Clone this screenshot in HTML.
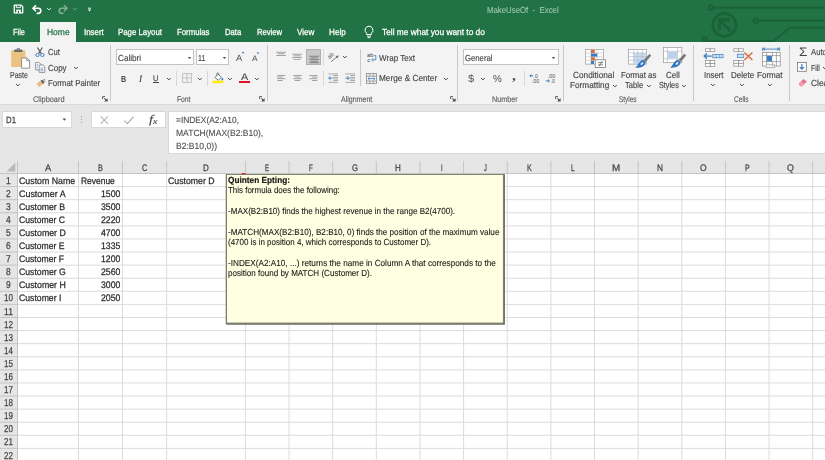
<!DOCTYPE html>
<html lang="en">
<head>
<meta charset="utf-8">
<title>MakeUseOf - Excel</title>
<style>
html,body{margin:0;padding:0;}
body{width:825px;height:460px;overflow:hidden;position:relative;background:#fff;font-family:"Liberation Sans",sans-serif;}
.tl{position:absolute;left:0;top:0;width:825px;height:460px;will-change:transform;}
.b{position:absolute;box-sizing:border-box;display:block;}
.t{position:absolute;white-space:pre;transform-origin:0 50%;display:block;text-rendering:geometricPrecision;-webkit-text-stroke:0.25px currentColor;}
</style>
</head>
<body>
<div class="b" style="left:0px;top:0px;width:825px;height:42px;background:#217346;"></div>
<div class="b" style="left:0px;top:42px;width:825px;height:62px;background:#f3f3f3;"></div>
<div class="b" style="left:0px;top:104px;width:825px;height:70px;background:#e6e6e6;"></div>
<div class="b" style="left:0px;top:104px;width:825px;height:1px;background:#dadada;"></div>
<svg class="b" style="left:690px;top:0px" width="135" height="42" viewBox="0 0 135 42">
<g fill="none" stroke="#1b6239" stroke-width="2">
<circle cx="20.9" cy="7.7" r="2.2"/><path d="M23.2 7.7H135"/>
<circle cx="65.8" cy="20.8" r="2.2"/><path d="M68.1 20.8H135"/>
<circle cx="14.4" cy="39.8" r="2.2"/><path d="M16.6 41H83.5L99.8 27.8H135"/>
<circle cx="34.4" cy="24.9" r="11.6" stroke-width="2.8"/>
<path d="M29.4 30.4V19.9H39.9M30.4 20.9L40.6 31.1" stroke-width="3.2"/>
</g></svg>
<svg class="b" style="left:13px;top:4px" width="11" height="10" viewBox="0 0 11 10"><path d="M1.3 1.1H8.2L9.7 2.6V8.9H1.3Z" fill="none" stroke="#fff" stroke-width="1.3" stroke-linejoin="round"/>
<rect x="3.2" y="5.6" width="4.6" height="3.6" fill="#fff"/><rect x="4.8" y="6.8" width="1.2" height="2.4" fill="#217346"/>
<path d="M3.3 1.2V3.6H7.4V1.2" fill="none" stroke="#fff" stroke-width="0.9"/></svg>
<svg class="b" style="left:31px;top:3.6px" width="14" height="11" viewBox="0 0 14 11"><path d="M2.2 4.2H7.2A2.6 2.6 0 0 1 7.2 9.4H5.6" fill="none" stroke="#fff" stroke-width="1.6"/>
<path d="M5 1.2L2 4.2L5 7.2" fill="none" stroke="#fff" stroke-width="1.6"/></svg>
<svg class="b" style="left:46px;top:6.2px" width="6" height="6" viewBox="0 0 6 6"><path d="M1 2L3 4L5 2" fill="none" stroke="#d6e7dc" stroke-width="1"/></svg>
<svg class="b" style="left:57px;top:3.6px" width="14" height="11" viewBox="0 0 14 11"><g opacity="0.42"><path d="M9.8 4.2H4.8A2.6 2.6 0 0 0 4.8 9.4H6.4" fill="none" stroke="#fff" stroke-width="1.6"/>
<path d="M7 1.2L10 4.2L7 7.2" fill="none" stroke="#fff" stroke-width="1.6"/></g></svg>
<svg class="b" style="left:72.2px;top:6.2px" width="6" height="6" viewBox="0 0 6 6"><path d="M1 2L3 4L5 2" fill="none" stroke="#fff" stroke-width="1" opacity="0.35"/></svg>
<svg class="b" style="left:86.8px;top:7.4px" width="5" height="6" viewBox="0 0 5 6"><path d="M1 1.2H4" stroke="#fff" stroke-width="0.9"/><path d="M0.8 2.6H4.2L2.5 4.6Z" fill="#fff"/></svg>
<div class="b" style="left:40.4px;top:22px;width:36px;height:20px;background:#f3f3f3;"></div>
<svg class="b" style="left:363px;top:25px" width="12" height="14" viewBox="0 0 12 14"><path d="M6 1.2A3.9 3.9 0 0 0 3.6 8.2V9.6H8.4V8.2A3.9 3.9 0 0 0 6 1.2Z" fill="none" stroke="#fff" stroke-width="1"/>
<path d="M4 11.2H8M4.6 12.6H7.4" stroke="#fff" stroke-width="0.9"/></svg>
<div class="b" style="left:2px;top:111px;width:69.5px;height:16.6px;background:#fff;border:1px solid #d9d9d9;"></div>
<svg class="b" style="left:62.4px;top:118px" width="5" height="4" viewBox="0 0 5 4"><path d="M0.5 0.6H4.3L2.4 2.7Z" fill="#505050"/></svg>
<svg class="b" style="left:80px;top:115px" width="3" height="10" viewBox="0 0 3 10"><g fill="#9a9a9a"><circle cx="1.5" cy="1.6" r="0.7"/><circle cx="1.5" cy="4.6" r="0.7"/><circle cx="1.5" cy="7.6" r="0.7"/></g></svg>
<div class="b" style="left:91.3px;top:111px;width:74.5px;height:16.6px;background:#fff;border:1px solid #d9d9d9;"></div>
<svg class="b" style="left:98.6px;top:115px" width="11" height="10" viewBox="0 0 11 10"><path d="M1.6 1.4L9 8.8M9 1.4L1.6 8.8" stroke="#b4b4b4" stroke-width="1.05" fill="none"/></svg>
<svg class="b" style="left:122.6px;top:115px" width="12" height="10" viewBox="0 0 12 10"><path d="M1.4 5.6L4.4 8.6L10.6 1.6" stroke="#b0b0b0" stroke-width="1.25" fill="none"/></svg>
<div class="b" style="left:168.3px;top:111px;width:660px;height:43px;background:#fff;border:1px solid #d9d9d9;"></div>
<div class="b" style="left:0px;top:173.5px;width:825px;height:286.5px;background:#fff;"></div>
<div class="b" style="left:0px;top:173.5px;width:17.5px;height:286.5px;background:#e6e6e6;"></div>
<svg class="b" style="left:0px;top:0px" width="825" height="460" viewBox="0 0 825 460"><g fill="none" stroke-width="1">
<path d="M17.5 186.59H825M17.5 199.68H825M17.5 212.77H825M17.5 225.86H825M17.5 238.95H825M17.5 252.04H825M17.5 265.13H825M17.5 278.22H825M17.5 291.31H825M17.5 304.40H825M17.5 317.49H825M17.5 330.58H825M17.5 343.67H825M17.5 356.76H825M17.5 369.85H825M17.5 382.94H825M17.5 396.03H825M17.5 409.12H825M17.5 422.21H825M17.5 435.30H825M17.5 448.39H825M17.5 461.48H825M78.50 173.5V460M122.55 173.5V460M166.60 173.5V460M245.40 173.5V460M289.04 173.5V460M332.68 173.5V460M376.32 173.5V460M419.96 173.5V460M463.60 173.5V460M507.24 173.5V460M550.88 173.5V460M594.52 173.5V460M638.16 173.5V460M681.80 173.5V460M725.44 173.5V460M769.08 173.5V460M812.72 173.5V460" stroke="#dcdcdc"/>
<path d="M0 186.59H17.5M0 199.68H17.5M0 212.77H17.5M0 225.86H17.5M0 238.95H17.5M0 252.04H17.5M0 265.13H17.5M0 278.22H17.5M0 291.31H17.5M0 304.40H17.5M0 317.49H17.5M0 330.58H17.5M0 343.67H17.5M0 356.76H17.5M0 369.85H17.5M0 382.94H17.5M0 396.03H17.5M0 409.12H17.5M0 422.21H17.5M0 435.30H17.5M0 448.39H17.5M0 461.48H17.5M78.50 161V173.5M122.55 161V173.5M166.60 161V173.5M245.40 161V173.5M289.04 161V173.5M332.68 161V173.5M376.32 161V173.5M419.96 161V173.5M463.60 161V173.5M507.24 161V173.5M550.88 161V173.5M594.52 161V173.5M638.16 161V173.5M681.80 161V173.5M725.44 161V173.5M769.08 161V173.5M812.72 161V173.5M17.5 161V460M0 173.5H825" stroke="#c4c4c4"/></g></svg>
<svg class="b" style="left:6px;top:162px" width="10" height="10" viewBox="0 0 10 10"><path d="M9.3 0.8V9.6H0.6Z" fill="#b9b9b9"/></svg>
<svg class="b" style="left:240.6px;top:173.2px" width="5" height="4" viewBox="0 0 5 4"><path d="M0 0H4.4V3.6Z" fill="#e0262c"/></svg>
<svg class="b" style="left:224px;top:172px" width="283" height="155" viewBox="0 0 283 155"><rect x="1.4" y="2.4" width="1.2" height="149.8" fill="#b9b9a6"/>
<rect x="2.2" y="2.1" width="278.7" height="150.6" fill="#66665e"/>
<rect x="3.0" y="2.9" width="276.0" height="147.9" fill="#ffffe1"/>
<path d="M279.4 3V151.2H3.4" fill="none" stroke="#8e8e7c" stroke-width="0.8"/></svg>
<svg class="b" style="left:10px;top:46.5px" width="21" height="22.5" viewBox="0 0 21 22.5">
<rect x="1.2" y="3.2" width="14.2" height="16.8" rx="0.7" fill="#eac282"/>
<path d="M4.2 5.1V3.2Q4.2 2.4 5 2.4H6.6Q6.9 0.7 8.3 0.7Q9.7 0.7 10 2.4H11.6Q12.4 2.4 12.4 3.2V5.1Z" fill="#6a6a6a"/>
<circle cx="8.3" cy="2.2" r="0.6" fill="#d8d8d8"/>
<path d="M11.6 10.9H16.8L19.6 13.7V21.2H11.6Z" fill="#fff" stroke="#7a7a7a" stroke-width="0.8"/>
<path d="M16.8 10.9V13.7H19.6" fill="none" stroke="#7a7a7a" stroke-width="0.8"/></svg>
<svg class="b" style="left:15.3px;top:83.25px" width="5.8" height="3.9" viewBox="0 0 5.8 3.9"><path d="M1 1L2.9 2.9L4.8 1" fill="none" stroke="#484848" stroke-width="1"/></svg>
<svg class="b" style="left:35px;top:46.8px" width="10" height="10.5" viewBox="0 0 10 10.5"><path d="M2.4 0.5L6.3 6.6M7.4 0.5L3.5 6.6" stroke="#555" stroke-width="1.1" fill="none"/>
<ellipse cx="2.5" cy="8" rx="1.7" ry="1.6" fill="none" stroke="#3e7cc0" stroke-width="0.95"/>
<ellipse cx="7.4" cy="8" rx="1.7" ry="1.6" fill="none" stroke="#3e7cc0" stroke-width="0.95"/></svg>
<svg class="b" style="left:35px;top:62px" width="10.5" height="11" viewBox="0 0 10.5 11"><path d="M0.6 0.6H4.2L5.9 2.3V7.8H0.6Z" fill="#fff" stroke="#7a7a7a" stroke-width="0.8"/>
<path d="M4.2 3H8L9.8 4.8V10.4H4.2Z" fill="#fff" stroke="#7a7a7a" stroke-width="0.8"/>
<path d="M5.4 6H8.4M5.4 7.4H8.4M5.4 8.8H8.4M1.8 2.6H3.2M1.8 4H3M1.8 5.4H3" stroke="#3e7cc0" stroke-width="0.6"/></svg>
<svg class="b" style="left:72.9px;top:65.65px" width="5.8" height="3.9" viewBox="0 0 5.8 3.9"><path d="M1 1L2.9 2.9L4.8 1" fill="none" stroke="#484848" stroke-width="1"/></svg>
<svg class="b" style="left:36px;top:79px" width="10" height="8.5" viewBox="0 0 10 8.5"><path d="M0.4 4.8L4.2 2L6.6 5.2L3 7.9Z" fill="#e9bd77"/>
<path d="M4.5 1.8L6 0.7L8.4 3.8L6.9 4.9Z" fill="#555"/><path d="M6.8 1.6L9 0.3M7.6 2.6L9.2 2" stroke="#555" stroke-width="0.8"/></svg>
<svg class="b" style="left:102.0px;top:96.19999999999999px" width="7" height="7" viewBox="0 0 7 7"><path d="M0.6 3V0.6H3" fill="none" stroke="#5a5a5a" stroke-width="1"/><path d="M2.4 2.4L4.6 4.6" fill="none" stroke="#4a4a4a" stroke-width="1.1"/><path d="M5.6 2.2V5.6H2.2Z" fill="#4a4a4a"/></svg>
<div class="b" style="left:110.1px;top:45.2px;width:1px;height:56.2px;background:#c8c8c8;"></div>
<div class="b" style="left:116.2px;top:49.2px;width:78.2px;height:16.2px;background:#fff;border:1px solid #c4c4c4;"></div>
<svg class="b" style="left:187px;top:55.7px" width="5" height="4" viewBox="0 0 5 4"><path d="M0.7 0.9H4.3L2.5 2.9Z" fill="#505050"/></svg>
<div class="b" style="left:196.3px;top:49.2px;width:33.2px;height:16.2px;background:#fff;border:1px solid #c4c4c4;"></div>
<svg class="b" style="left:222.2px;top:55.7px" width="5" height="4" viewBox="0 0 5 4"><path d="M0.7 0.9H4.3L2.5 2.9Z" fill="#505050"/></svg>
<svg class="b" style="left:240.6px;top:51.0px" width="4" height="3" viewBox="0 0 4 3"><path d="M0.5 2.3L2 0.6L3.5 2.3Z" fill="#3e7cc0"/></svg>
<svg class="b" style="left:256.2px;top:51.6px" width="4" height="3" viewBox="0 0 4 3"><path d="M0.5 0.6L2 2.3L3.5 0.6Z" fill="#3e7cc0"/></svg>
<div class="b" style="left:153.2px;top:81.8px;width:6.0px;height:0.9px;background:#444;"></div>
<svg class="b" style="left:165.9px;top:76.95px" width="5.8" height="3.9" viewBox="0 0 5.8 3.9"><path d="M1 1L2.9 2.9L4.8 1" fill="none" stroke="#484848" stroke-width="1"/></svg>
<div class="b" style="left:176.1px;top:71.4px;width:1px;height:14.2px;background:#d8d8d8;"></div>
<svg class="b" style="left:181.6px;top:73.2px" width="10" height="10" viewBox="0 0 10 10"><g fill="none" stroke="#bcbcbc" stroke-width="0.9"><rect x="0.6" y="0.6" width="8.8" height="8.8"/><path d="M5 0.6V9.4M0.6 5H9.4"/></g></svg>
<svg class="b" style="left:196.6px;top:76.95px" width="5.8" height="3.9" viewBox="0 0 5.8 3.9"><path d="M1 1L2.9 2.9L4.8 1" fill="none" stroke="#484848" stroke-width="1"/></svg>
<div class="b" style="left:207.1px;top:71.4px;width:1px;height:14.2px;background:#d8d8d8;"></div>
<svg class="b" style="left:211.8px;top:72.2px" width="12" height="12" viewBox="0 0 12 12"><path d="M3 5.4L6.2 2.2L9.4 5.4L6.2 8.2Z" fill="#fff" stroke="#666" stroke-width="0.9"/>
<path d="M4.8 3.6V1.8Q4.8 0.8 5.8 0.8Q6.8 0.8 6.8 1.8V2.6" fill="none" stroke="#666" stroke-width="0.8"/>
<path d="M10.4 5.4Q11.4 7 11.4 7.6A1 1 0 0 1 9.4 7.6Q9.4 7 10.4 5.4Z" fill="#3e7cc0"/>
<rect x="0.5" y="8.7" width="10.8" height="2.5" fill="#ffeb00"/></svg>
<svg class="b" style="left:226.9px;top:76.95px" width="5.8" height="3.9" viewBox="0 0 5.8 3.9"><path d="M1 1L2.9 2.9L4.8 1" fill="none" stroke="#484848" stroke-width="1"/></svg>
<div class="b" style="left:239.1px;top:80.9px;width:10.5px;height:2.5px;background:#e81123;"></div>
<svg class="b" style="left:253.7px;top:76.95px" width="5.8" height="3.9" viewBox="0 0 5.8 3.9"><path d="M1 1L2.9 2.9L4.8 1" fill="none" stroke="#484848" stroke-width="1"/></svg>
<svg class="b" style="left:259.0px;top:96.19999999999999px" width="7" height="7" viewBox="0 0 7 7"><path d="M0.6 3V0.6H3" fill="none" stroke="#5a5a5a" stroke-width="1"/><path d="M2.4 2.4L4.6 4.6" fill="none" stroke="#4a4a4a" stroke-width="1.1"/><path d="M5.6 2.2V5.6H2.2Z" fill="#4a4a4a"/></svg>
<div class="b" style="left:267.3px;top:45.2px;width:1px;height:56.2px;background:#c8c8c8;"></div>
<svg class="b" style="left:276px;top:50px" width="12" height="14" viewBox="0 0 12 14"><rect x="0.2" y="1.8" width="9.8" height="0.75" fill="#8a8a8a"/><rect x="1.6" y="3.4" width="7" height="0.75" fill="#8a8a8a"/><rect x="0.2" y="5.0" width="9.8" height="0.75" fill="#8a8a8a"/></svg>
<svg class="b" style="left:292.0px;top:50px" width="12" height="14" viewBox="0 0 12 14"><rect x="0.2" y="3.8" width="9.8" height="0.75" fill="#8a8a8a"/><rect x="1.6" y="5.5" width="7" height="0.75" fill="#8a8a8a"/><rect x="0.2" y="7.2" width="9.8" height="0.75" fill="#8a8a8a"/><rect x="1.6" y="8.9" width="7" height="0.75" fill="#8a8a8a"/></svg>
<div class="b" style="left:305.8px;top:49.2px;width:15.5px;height:16.2px;background:#c8c8c8;border:1px solid #b0b0b0;"></div>
<svg class="b" style="left:308.6px;top:50px" width="12" height="14" viewBox="0 0 12 14"><rect x="0.2" y="5.8" width="9.8" height="0.75" fill="#6e6e6e"/><rect x="1.6" y="7.5" width="7" height="0.75" fill="#6e6e6e"/><rect x="0.2" y="9.2" width="9.8" height="0.75" fill="#6e6e6e"/><rect x="1.6" y="10.9" width="7" height="0.75" fill="#6e6e6e"/><rect x="0.2" y="12.4" width="9.8" height="0.75" fill="#6e6e6e"/></svg>
<div class="b" style="left:323.2px;top:49.4px;width:1px;height:16.0px;background:#d8d8d8;"></div>
<svg class="b" style="left:328px;top:51px" width="12" height="12" viewBox="0 0 12 12"><text x="0.4" y="6.6" font-size="5.8" font-family="Liberation Sans" fill="#555" transform="rotate(-40 3 6)">ab</text>
<path d="M3.2 10.6L9.4 5.6" stroke="#6a6a6a" stroke-width="0.9"/><path d="M10.8 4.4L7.6 5L9.4 7.4Z" fill="#6a6a6a"/></svg>
<svg class="b" style="left:341.7px;top:55.45px" width="5.8" height="3.9" viewBox="0 0 5.8 3.9"><path d="M1 1L2.9 2.9L4.8 1" fill="none" stroke="#484848" stroke-width="1"/></svg>
<div class="b" style="left:360.1px;top:49.4px;width:1px;height:36.4px;background:#c8c8c8;"></div>
<svg class="b" style="left:366.6px;top:51.6px" width="10" height="11" viewBox="0 0 10 11"><text x="0" y="4.9" font-size="6.2" font-family="Liberation Sans" fill="#404040" textLength="6.4" lengthAdjust="spacingAndGlyphs">ab</text>
<text x="0.2" y="10" font-size="6.2" font-family="Liberation Sans" fill="#404040">c</text>
<path d="M7.2 3.6H8.8V7.8H5.2" fill="none" stroke="#3e7cc0" stroke-width="0.85"/><path d="M6.2 6.4L4.6 7.8L6.2 9.2" fill="none" stroke="#3e7cc0" stroke-width="0.85"/></svg>
<svg class="b" style="left:276.6px;top:73px" width="12" height="14" viewBox="0 0 12 14"><rect x="0.2" y="2.0" width="8.2" height="0.75" fill="#8a8a8a"/><rect x="0.2" y="3.7" width="5.6" height="0.75" fill="#8a8a8a"/><rect x="0.2" y="5.4" width="8.2" height="0.75" fill="#8a8a8a"/><rect x="0.2" y="7.1" width="5.6" height="0.75" fill="#8a8a8a"/></svg>
<svg class="b" style="left:292.6px;top:73px" width="12" height="14" viewBox="0 0 12 14"><rect x="0.2" y="2.0" width="8.6" height="0.75" fill="#8a8a8a"/><rect x="1.7" y="3.7" width="5.6" height="0.75" fill="#8a8a8a"/><rect x="0.2" y="5.4" width="8.6" height="0.75" fill="#8a8a8a"/><rect x="1.7" y="7.1" width="5.6" height="0.75" fill="#8a8a8a"/></svg>
<svg class="b" style="left:309.4px;top:73px" width="12" height="14" viewBox="0 0 12 14"><rect x="0.2" y="2.0" width="8.2" height="0.75" fill="#8a8a8a"/><rect x="2.8" y="3.7" width="5.6" height="0.75" fill="#8a8a8a"/><rect x="0.2" y="5.4" width="8.2" height="0.75" fill="#8a8a8a"/><rect x="2.8" y="7.1" width="5.6" height="0.75" fill="#8a8a8a"/></svg>
<div class="b" style="left:323.2px;top:71.4px;width:1px;height:14.2px;background:#d8d8d8;"></div>
<svg class="b" style="left:328.4px;top:73.2px" width="11" height="10" viewBox="0 0 11 10"><rect x="0.4" y="0.6" width="9.6" height="0.7" fill="#8a8a8a"/><rect x="0.4" y="8.9" width="9.6" height="0.7" fill="#8a8a8a"/><rect x="5.2" y="2.2" width="4.8" height="0.7" fill="#8a8a8a"/><rect x="5.2" y="3.9" width="4.8" height="0.7" fill="#8a8a8a"/><rect x="5.2" y="5.6" width="4.8" height="0.7" fill="#8a8a8a"/><rect x="5.2" y="7.3" width="4.8" height="0.7" fill="#8a8a8a"/>
<path d="M4.6 5.1H0.8M2.5 3.3L0.7 5.1L2.5 6.9" fill="none" stroke="#3e7cc0" stroke-width="1"/></svg>
<svg class="b" style="left:344.8px;top:73.2px" width="11" height="10" viewBox="0 0 11 10"><rect x="0.4" y="0.6" width="9.6" height="0.7" fill="#8a8a8a"/><rect x="0.4" y="8.9" width="9.6" height="0.7" fill="#8a8a8a"/><rect x="5.2" y="2.2" width="4.8" height="0.7" fill="#8a8a8a"/><rect x="5.2" y="3.9" width="4.8" height="0.7" fill="#8a8a8a"/><rect x="5.2" y="5.6" width="4.8" height="0.7" fill="#8a8a8a"/><rect x="5.2" y="7.3" width="4.8" height="0.7" fill="#8a8a8a"/>
<path d="M0.4 5.1H4.2M2.5 3.3L4.3 5.1L2.5 6.9" fill="none" stroke="#3e7cc0" stroke-width="1"/></svg>
<svg class="b" style="left:365.6px;top:72.8px" width="11" height="11.4" viewBox="0 0 11 11.4"><g fill="none" stroke="#868686" stroke-width="0.75"><rect x="0.5" y="0.5" width="10" height="10.2"/><path d="M0.5 3.2H10.5M0.5 8H10.5M3.8 0.5V3.2M7.2 0.5V3.2M3.8 8V10.7M7.2 8V10.7"/></g>
<path d="M2 5.6H9M3.3 4.4L2 5.6L3.3 6.8M7.7 4.4L9 5.6L7.7 6.8" fill="none" stroke="#3e7cc0" stroke-width="0.85"/></svg>
<svg class="b" style="left:443.4px;top:76.95px" width="5.8" height="3.9" viewBox="0 0 5.8 3.9"><path d="M1 1L2.9 2.9L4.8 1" fill="none" stroke="#484848" stroke-width="1"/></svg>
<svg class="b" style="left:449.7px;top:96.19999999999999px" width="7" height="7" viewBox="0 0 7 7"><path d="M0.6 3V0.6H3" fill="none" stroke="#5a5a5a" stroke-width="1"/><path d="M2.4 2.4L4.6 4.6" fill="none" stroke="#4a4a4a" stroke-width="1.1"/><path d="M5.6 2.2V5.6H2.2Z" fill="#4a4a4a"/></svg>
<div class="b" style="left:457.3px;top:45.2px;width:1px;height:56.2px;background:#c8c8c8;"></div>
<div class="b" style="left:463.2px;top:49.2px;width:95.4px;height:16.2px;background:#fff;border:1px solid #c4c4c4;"></div>
<svg class="b" style="left:551.2px;top:55.7px" width="5" height="4" viewBox="0 0 5 4"><path d="M0.7 0.9H4.3L2.5 2.9Z" fill="#505050"/></svg>
<svg class="b" style="left:480.4px;top:76.95px" width="5.8" height="3.9" viewBox="0 0 5.8 3.9"><path d="M1 1L2.9 2.9L4.8 1" fill="none" stroke="#484848" stroke-width="1"/></svg>
<div class="b" style="left:523.9px;top:71.4px;width:1px;height:14.2px;background:#d8d8d8;"></div>
<svg class="b" style="left:529px;top:73px" width="11" height="11" viewBox="0 0 11 11"><text x="4.6" y="4.8" font-size="5" font-family="Liberation Sans" fill="#4a4a4a">.0</text>
<text x="2.8" y="9.9" font-size="5" font-family="Liberation Sans" fill="#4a4a4a" textLength="7.4" lengthAdjust="spacingAndGlyphs">.00</text>
<path d="M4.2 2.8H0.9M2.3 1.4L0.8 2.8L2.3 4.2" fill="none" stroke="#3e7cc0" stroke-width="1"/></svg>
<svg class="b" style="left:545.2px;top:73px" width="11" height="11" viewBox="0 0 11 11"><text x="2.8" y="4.8" font-size="5" font-family="Liberation Sans" fill="#4a4a4a" textLength="7.4" lengthAdjust="spacingAndGlyphs">.00</text>
<text x="5.6" y="9.9" font-size="5" font-family="Liberation Sans" fill="#4a4a4a">.0</text>
<path d="M0.8 7.9H4.3M2.9 6.5L4.4 7.9L2.9 9.3" fill="none" stroke="#3e7cc0" stroke-width="1"/></svg>
<svg class="b" style="left:555.4px;top:96.19999999999999px" width="7" height="7" viewBox="0 0 7 7"><path d="M0.6 3V0.6H3" fill="none" stroke="#5a5a5a" stroke-width="1"/><path d="M2.4 2.4L4.6 4.6" fill="none" stroke="#4a4a4a" stroke-width="1.1"/><path d="M5.6 2.2V5.6H2.2Z" fill="#4a4a4a"/></svg>
<div class="b" style="left:562.9px;top:45.2px;width:1px;height:56.2px;background:#c8c8c8;"></div>
<svg class="b" style="left:585px;top:49px" width="22" height="20" viewBox="0 0 22 20"><rect x="0.5" y="0.5" width="18" height="14.6" fill="#fff" stroke="#9a9a9a" stroke-width="0.7"/>
<path d="M5.8 0.5V15.1M12.2 0.5V15.1M0.5 4.1H18.5M0.5 7.8H18.5M0.5 11.4H18.5" stroke="#bdbdbd" stroke-width="0.6"/>
<rect x="6" y="0.8" width="3.8" height="3.1" fill="#d8693c"/><rect x="6" y="4.5" width="6.2" height="3.1" fill="#3e7cc0"/>
<rect x="6" y="8.2" width="3.8" height="3.1" fill="#d8693c"/><rect x="6" y="11.8" width="3" height="3.1" fill="#3e7cc0"/>
<rect x="10.2" y="10.8" width="10.2" height="7.6" fill="#fff" stroke="#7a7a7a" stroke-width="0.8"/>
<path d="M13 13.6H18M13 15.8H18M17.2 12.2L14.2 17.2" stroke="#555" stroke-width="0.7"/></svg>
<svg class="b" style="left:611.5px;top:83.65px" width="5.8" height="3.9" viewBox="0 0 5.8 3.9"><path d="M1 1L2.9 2.9L4.8 1" fill="none" stroke="#484848" stroke-width="1"/></svg>
<svg class="b" style="left:628.4px;top:49px" width="25" height="20" viewBox="0 0 25 20"><rect x="0.5" y="0.5" width="18" height="14.6" fill="#fff" stroke="#9a9a9a" stroke-width="0.7"/>
<rect x="5.6" y="3.9" width="12.8" height="11.1" fill="#c9dbf0"/>
<path d="M5.6 0.5V15.1M9.9 0.5V15.1M14.2 0.5V15.1M0.5 3.9H18.5M0.5 7.6H18.5M0.5 11.3H18.5" stroke="#a9b4c4" stroke-width="0.55"/>
<g transform="translate(-0.4 1.6)"><path d="M21.8 3.4L23.6 5L18 11.6L15.8 9.6Z" fill="#777777"/>
<path d="M15.4 9.4L18 11.8C17.8 15.6 12.6 17.6 7.6 17.2C10.4 15.6 10.8 10.4 15.4 9.4Z" fill="#2f75c0"/>
<ellipse cx="14.4" cy="13" rx="1.7" ry="1" fill="#e4eefa" transform="rotate(-40 14.4 13)"/></g></svg>
<svg class="b" style="left:645.5px;top:83.65px" width="5.8" height="3.9" viewBox="0 0 5.8 3.9"><path d="M1 1L2.9 2.9L4.8 1" fill="none" stroke="#484848" stroke-width="1"/></svg>
<svg class="b" style="left:662.6px;top:47.2px" width="25" height="22" viewBox="0 0 25 22"><rect x="0.5" y="0.5" width="18.4" height="15.2" fill="#fff" stroke="#9a9a9a" stroke-width="0.7"/>
<path d="M4.4 0.5V15.7M14.6 0.5V15.7M0.5 4.3H18.9M0.5 11.9H18.9" stroke="#b0b0b0" stroke-width="0.6"/>
<rect x="4.7" y="4.6" width="9.6" height="7" fill="#bcd2ec"/>
<g transform="translate(0 1.8)"><g transform="translate(-0.4 1.6)"><path d="M21.8 3.4L23.6 5L18 11.6L15.8 9.6Z" fill="#777777"/>
<path d="M15.4 9.4L18 11.8C17.8 15.6 12.6 17.6 7.6 17.2C10.4 15.6 10.8 10.4 15.4 9.4Z" fill="#2f75c0"/>
<ellipse cx="14.4" cy="13" rx="1.7" ry="1" fill="#e4eefa" transform="rotate(-40 14.4 13)"/></g></g></svg>
<svg class="b" style="left:681.1px;top:83.65px" width="5.8" height="3.9" viewBox="0 0 5.8 3.9"><path d="M1 1L2.9 2.9L4.8 1" fill="none" stroke="#484848" stroke-width="1"/></svg>
<div class="b" style="left:692.8px;top:45.2px;width:1px;height:56.2px;background:#c8c8c8;"></div>
<svg class="b" style="left:703px;top:47.6px" width="21" height="20" viewBox="0 0 21 20"><g fill="#fff" stroke="#8a8a8a" stroke-width="0.7"><rect x="2.6" y="0.8" width="4.6" height="2.8"/><rect x="7.2" y="0.8" width="4.6" height="2.8"/>
<rect x="2.6" y="12.6" width="4.6" height="2.9"/><rect x="7.2" y="12.6" width="4.6" height="2.9"/><rect x="2.6" y="15.5" width="4.6" height="2.9"/><rect x="7.2" y="15.5" width="4.6" height="2.9"/></g>
<rect x="9.8" y="6.4" width="10.2" height="3.4" fill="#cfe0f3" stroke="#3e7cc0" stroke-width="0.7"/><path d="M13.2 6.4V9.8M16.6 6.4V9.8" stroke="#3e7cc0" stroke-width="0.5"/>
<path d="M8.8 8.1H1.4M4 5.4L1.2 8.1L4 10.8" fill="none" stroke="#3e7cc0" stroke-width="1.4"/></svg>
<svg class="b" style="left:710.4px;top:83.25px" width="5.8" height="3.9" viewBox="0 0 5.8 3.9"><path d="M1 1L2.9 2.9L4.8 1" fill="none" stroke="#484848" stroke-width="1"/></svg>
<svg class="b" style="left:732.6px;top:47.6px" width="21" height="20" viewBox="0 0 21 20"><g fill="#fff" stroke="#8a8a8a" stroke-width="0.7"><rect x="0.8" y="0.8" width="4.8" height="2.8"/><rect x="5.6" y="0.8" width="4.8" height="2.8"/>
<rect x="0.8" y="12.4" width="4.8" height="2.9"/><rect x="5.6" y="12.4" width="4.8" height="2.9"/><rect x="0.8" y="15.3" width="4.8" height="2.9"/><rect x="5.6" y="15.3" width="4.8" height="2.9"/></g>
<rect x="4.6" y="6.2" width="6.2" height="3.2" fill="#cfe0f3" stroke="#3e7cc0" stroke-width="0.7"/>
<path d="M11.4 4.4L19.4 12M19.4 4.4L11.4 12" stroke="#d8693c" stroke-width="1.4" fill="none"/></svg>
<svg class="b" style="left:739.4px;top:83.25px" width="5.8" height="3.9" viewBox="0 0 5.8 3.9"><path d="M1 1L2.9 2.9L4.8 1" fill="none" stroke="#484848" stroke-width="1"/></svg>
<svg class="b" style="left:760.6px;top:46.6px" width="21" height="22" viewBox="0 0 21 22"><path d="M1.6 0.4V3.8M18.6 0.4V3.8M2.2 2.1H18" stroke="#3e7cc0" stroke-width="0.9" fill="none"/>
<path d="M4.2 0.7L2.2 2.1L4.2 3.5M16 0.7L18 2.1L16 3.5" stroke="#3e7cc0" stroke-width="0.9" fill="none"/>
<g fill="#fff" stroke="#8a8a8a" stroke-width="0.7"><rect x="1.4" y="5.4" width="17.8" height="13.6"/><path d="M5.6 5.4V19M11.4 5.4V8.6M11.4 14.6V19M15.4 5.4V19M1.4 8.6H19.2M1.4 14.6H19.2" fill="none"/></g>
<rect x="5.9" y="8.9" width="5.2" height="5.4" fill="#3e7cc0"/>
<path d="M5 17.6Q7 16.4 9.4 17.6Q11.8 18.8 13.6 17.6V20.6H5Z" fill="#f3f3f3" stroke="#8a8a8a" stroke-width="0.6"/></svg>
<svg class="b" style="left:766.9px;top:83.25px" width="5.8" height="3.9" viewBox="0 0 5.8 3.9"><path d="M1 1L2.9 2.9L4.8 1" fill="none" stroke="#484848" stroke-width="1"/></svg>
<div class="b" style="left:789.1px;top:45.2px;width:1px;height:56.2px;background:#c8c8c8;"></div>
<svg class="b" style="left:797.4px;top:62.2px" width="10" height="10" viewBox="0 0 10 10"><rect x="0.5" y="0.5" width="8.8" height="8.8" fill="#fff" stroke="#777" stroke-width="0.8"/>
<path d="M4.9 2V7.2M2.8 5.1L4.9 7.2L7 5.1" fill="none" stroke="#3e7cc0" stroke-width="1.2"/></svg>
<svg class="b" style="left:821.7px;top:65.65px" width="5.8" height="3.9" viewBox="0 0 5.8 3.9"><path d="M1 1L2.9 2.9L4.8 1" fill="none" stroke="#484848" stroke-width="1"/></svg>
<svg class="b" style="left:797.8px;top:78.4px" width="10" height="9" viewBox="0 0 10 9"><path d="M0.8 5.6L5.4 1L8.8 3.6L4.2 8.2L2 8.2Z" fill="#e8708a"/><path d="M0.8 5.6L3.2 3.2L6.4 6L4.2 8.2L2 8.2Z" fill="#f0a0b2"/></svg>
<div class="tl">
<span class="t" style="left:486.50px;top:5.55px;font-size:8.8px;line-height:8.8px;color:#a6cab5;transform:scaleX(0.8888);-webkit-text-stroke-width:0.05px;">MakeUseOf  -  Excel</span>
<span class="t" style="left:12.70px;top:27.55px;font-size:8.8px;line-height:8.8px;color:#fff;transform:scaleX(0.8458);">File</span>
<span class="t" style="left:46.70px;top:27.55px;font-size:8.8px;line-height:8.8px;color:#217346;transform:scaleX(0.9630);">Home</span>
<span class="t" style="left:83.70px;top:27.55px;font-size:8.8px;line-height:8.8px;color:#fff;transform:scaleX(0.8948);">Insert</span>
<span class="t" style="left:118.00px;top:27.55px;font-size:8.8px;line-height:8.8px;color:#fff;transform:scaleX(0.8906);">Page Layout</span>
<span class="t" style="left:176.50px;top:27.55px;font-size:8.8px;line-height:8.8px;color:#fff;transform:scaleX(0.8862);">Formulas</span>
<span class="t" style="left:224.70px;top:27.55px;font-size:8.8px;line-height:8.8px;color:#fff;transform:scaleX(0.8766);">Data</span>
<span class="t" style="left:256.70px;top:27.55px;font-size:8.8px;line-height:8.8px;color:#fff;transform:scaleX(0.8702);">Review</span>
<span class="t" style="left:296.70px;top:27.55px;font-size:8.8px;line-height:8.8px;color:#fff;transform:scaleX(0.9143);">View</span>
<span class="t" style="left:328.70px;top:27.55px;font-size:8.8px;line-height:8.8px;color:#fff;transform:scaleX(0.9285);">Help</span>
<span class="t" style="left:381.70px;top:27.55px;font-size:8.8px;line-height:8.8px;color:#fff;transform:scaleX(0.9478);">Tell me what you want to do</span>
<span class="t" style="left:6.30px;top:116.38px;font-size:9.0px;line-height:9.0px;color:#444;transform:scaleX(0.8684);">D1</span>
<span class="t" style="left:149.00px;top:114.18px;font-size:11.6px;line-height:11.6px;color:#444;transform:scaleX(1.2367);font-style:italic;font-family:'Liberation Serif',serif;-webkit-text-stroke-width:0.1px;">f</span>
<span class="t" style="left:153.20px;top:117.89px;font-size:8.4px;line-height:8.4px;color:#444;transform:scaleX(1.1832);font-style:italic;font-family:'Liberation Serif',serif;-webkit-text-stroke-width:0.1px;">x</span>
<span class="t" style="left:175.70px;top:116.38px;font-size:9.0px;line-height:9.0px;color:#505050;transform:scaleX(0.9295);-webkit-text-stroke-width:0.12px;">=INDEX(A2:A10,</span>
<span class="t" style="left:175.70px;top:129.38px;font-size:9.0px;line-height:9.0px;color:#505050;transform:scaleX(0.9493);-webkit-text-stroke-width:0.12px;">MATCH(MAX(B2:B10),</span>
<span class="t" style="left:175.70px;top:142.38px;font-size:9.0px;line-height:9.0px;color:#505050;transform:scaleX(0.9528);-webkit-text-stroke-width:0.12px;">B2:B10,0))</span>
<span class="t" style="left:44.90px;top:163.96px;font-size:9.5px;line-height:9.5px;color:#444444;transform:scaleX(0.9773);">A</span>
<span class="t" style="left:98.08px;top:163.96px;font-size:9.5px;line-height:9.5px;color:#444444;transform:scaleX(0.7724);">B</span>
<span class="t" style="left:141.92px;top:163.96px;font-size:9.5px;line-height:9.5px;color:#444444;transform:scaleX(0.7709);">C</span>
<span class="t" style="left:203.10px;top:163.96px;font-size:9.5px;line-height:9.5px;color:#444444;transform:scaleX(0.8436);">D</span>
<span class="t" style="left:265.22px;top:163.96px;font-size:9.5px;line-height:9.5px;color:#444444;transform:scaleX(0.6305);">E</span>
<span class="t" style="left:308.96px;top:163.96px;font-size:9.5px;line-height:9.5px;color:#444444;transform:scaleX(0.6538);">F</span>
<span class="t" style="left:351.50px;top:163.96px;font-size:9.5px;line-height:9.5px;color:#444444;transform:scaleX(0.8118);">G</span>
<span class="t" style="left:395.24px;top:163.96px;font-size:9.5px;line-height:9.5px;color:#444444;transform:scaleX(0.8436);">H</span>
<span class="t" style="left:440.98px;top:163.96px;font-size:9.5px;line-height:9.5px;color:#444444;transform:scaleX(0.6059);">I</span>
<span class="t" style="left:484.02px;top:163.96px;font-size:9.5px;line-height:9.5px;color:#444444;transform:scaleX(0.5895);">J</span>
<span class="t" style="left:526.66px;top:163.96px;font-size:9.5px;line-height:9.5px;color:#444444;transform:scaleX(0.7567);">K</span>
<span class="t" style="left:570.90px;top:163.96px;font-size:9.5px;line-height:9.5px;color:#444444;transform:scaleX(0.6796);">L</span>
<span class="t" style="left:612.24px;top:163.96px;font-size:9.5px;line-height:9.5px;color:#444444;transform:scaleX(1.0351);">M</span>
<span class="t" style="left:656.98px;top:163.96px;font-size:9.5px;line-height:9.5px;color:#444444;transform:scaleX(0.8727);">N</span>
<span class="t" style="left:700.32px;top:163.96px;font-size:9.5px;line-height:9.5px;color:#444444;transform:scaleX(0.8930);">O</span>
<span class="t" style="left:744.91px;top:163.96px;font-size:9.5px;line-height:9.5px;color:#444444;transform:scaleX(0.7409);">P</span>
<span class="t" style="left:787.45px;top:163.96px;font-size:9.5px;line-height:9.5px;color:#444444;transform:scaleX(0.9336);">Q</span>
<span class="t" style="left:5.95px;top:176.53px;font-size:10.0px;line-height:10.0px;color:#444444;transform:scaleX(0.8449);">1</span>
<span class="t" style="left:5.95px;top:189.53px;font-size:10.0px;line-height:10.0px;color:#444444;transform:scaleX(0.8449);">2</span>
<span class="t" style="left:5.95px;top:202.53px;font-size:10.0px;line-height:10.0px;color:#444444;transform:scaleX(0.8449);">3</span>
<span class="t" style="left:5.95px;top:215.53px;font-size:10.0px;line-height:10.0px;color:#444444;transform:scaleX(0.8449);">4</span>
<span class="t" style="left:5.95px;top:228.53px;font-size:10.0px;line-height:10.0px;color:#444444;transform:scaleX(0.8449);">5</span>
<span class="t" style="left:5.95px;top:241.53px;font-size:10.0px;line-height:10.0px;color:#444444;transform:scaleX(0.8449);">6</span>
<span class="t" style="left:5.95px;top:254.53px;font-size:10.0px;line-height:10.0px;color:#444444;transform:scaleX(0.8449);">7</span>
<span class="t" style="left:5.95px;top:267.54px;font-size:10.0px;line-height:10.0px;color:#444444;transform:scaleX(0.8449);">8</span>
<span class="t" style="left:5.95px;top:280.54px;font-size:10.0px;line-height:10.0px;color:#444444;transform:scaleX(0.8449);">9</span>
<span class="t" style="left:3.85px;top:293.54px;font-size:10.0px;line-height:10.0px;color:#444444;transform:scaleX(0.8000);">10</span>
<span class="t" style="left:3.85px;top:307.54px;font-size:10.0px;line-height:10.0px;color:#444444;transform:scaleX(0.8565);">11</span>
<span class="t" style="left:3.85px;top:320.54px;font-size:10.0px;line-height:10.0px;color:#444444;transform:scaleX(0.8000);">12</span>
<span class="t" style="left:3.85px;top:333.54px;font-size:10.0px;line-height:10.0px;color:#444444;transform:scaleX(0.8000);">13</span>
<span class="t" style="left:3.85px;top:346.54px;font-size:10.0px;line-height:10.0px;color:#444444;transform:scaleX(0.8000);">14</span>
<span class="t" style="left:3.85px;top:359.54px;font-size:10.0px;line-height:10.0px;color:#444444;transform:scaleX(0.8000);">15</span>
<span class="t" style="left:3.85px;top:372.54px;font-size:10.0px;line-height:10.0px;color:#444444;transform:scaleX(0.8000);">16</span>
<span class="t" style="left:3.85px;top:385.54px;font-size:10.0px;line-height:10.0px;color:#444444;transform:scaleX(0.8000);">17</span>
<span class="t" style="left:3.85px;top:398.54px;font-size:10.0px;line-height:10.0px;color:#444444;transform:scaleX(0.8000);">18</span>
<span class="t" style="left:3.85px;top:411.54px;font-size:10.0px;line-height:10.0px;color:#444444;transform:scaleX(0.8000);">19</span>
<span class="t" style="left:3.85px;top:424.54px;font-size:10.0px;line-height:10.0px;color:#444444;transform:scaleX(0.8000);">20</span>
<span class="t" style="left:3.85px;top:437.54px;font-size:10.0px;line-height:10.0px;color:#444444;transform:scaleX(0.8000);">21</span>
<span class="t" style="left:3.85px;top:451.54px;font-size:10.0px;line-height:10.0px;color:#444444;transform:scaleX(0.8000);">22</span>
<span class="t" style="left:19.30px;top:176.04px;font-size:9.4px;line-height:9.4px;color:#2b2b2b;transform:scaleX(0.9379);">Custom Name</span>
<span class="t" style="left:81.00px;top:176.04px;font-size:9.4px;line-height:9.4px;color:#2b2b2b;transform:scaleX(0.9006);">Revenue</span>
<span class="t" style="left:19.30px;top:189.04px;font-size:9.4px;line-height:9.4px;color:#2b2b2b;transform:scaleX(0.9513);">Customer A</span>
<span class="t" style="left:101.00px;top:189.87px;font-size:9.6px;line-height:9.6px;color:#2b2b2b;transform:scaleX(0.9089);">1500</span>
<span class="t" style="left:19.30px;top:202.04px;font-size:9.4px;line-height:9.4px;color:#2b2b2b;transform:scaleX(0.9293);">Customer B</span>
<span class="t" style="left:101.00px;top:202.87px;font-size:9.6px;line-height:9.6px;color:#2b2b2b;transform:scaleX(0.9089);">3500</span>
<span class="t" style="left:19.30px;top:215.04px;font-size:9.4px;line-height:9.4px;color:#2b2b2b;transform:scaleX(0.9197);">Customer C</span>
<span class="t" style="left:101.00px;top:215.87px;font-size:9.6px;line-height:9.6px;color:#2b2b2b;transform:scaleX(0.9089);">2220</span>
<span class="t" style="left:19.30px;top:228.04px;font-size:9.4px;line-height:9.4px;color:#2b2b2b;transform:scaleX(0.9357);">Customer D</span>
<span class="t" style="left:101.00px;top:228.87px;font-size:9.6px;line-height:9.6px;color:#2b2b2b;transform:scaleX(0.9089);">4700</span>
<span class="t" style="left:19.30px;top:241.04px;font-size:9.4px;line-height:9.4px;color:#2b2b2b;transform:scaleX(0.9172);">Customer E</span>
<span class="t" style="left:101.00px;top:241.87px;font-size:9.6px;line-height:9.6px;color:#2b2b2b;transform:scaleX(0.9089);">1335</span>
<span class="t" style="left:19.30px;top:254.04px;font-size:9.4px;line-height:9.4px;color:#2b2b2b;transform:scaleX(0.9190);">Customer F</span>
<span class="t" style="left:101.00px;top:254.87px;font-size:9.6px;line-height:9.6px;color:#2b2b2b;transform:scaleX(0.9089);">1200</span>
<span class="t" style="left:19.30px;top:267.04px;font-size:9.4px;line-height:9.4px;color:#2b2b2b;transform:scaleX(0.9259);">Customer G</span>
<span class="t" style="left:101.00px;top:267.87px;font-size:9.6px;line-height:9.6px;color:#2b2b2b;transform:scaleX(0.9089);">2560</span>
<span class="t" style="left:19.30px;top:280.04px;font-size:9.4px;line-height:9.4px;color:#2b2b2b;transform:scaleX(0.9357);">Customer H</span>
<span class="t" style="left:101.00px;top:280.87px;font-size:9.6px;line-height:9.6px;color:#2b2b2b;transform:scaleX(0.9089);">3000</span>
<span class="t" style="left:19.30px;top:293.04px;font-size:9.4px;line-height:9.4px;color:#2b2b2b;transform:scaleX(0.9246);">Customer I</span>
<span class="t" style="left:101.00px;top:293.87px;font-size:9.6px;line-height:9.6px;color:#2b2b2b;transform:scaleX(0.9089);">2050</span>
<span class="t" style="left:167.90px;top:176.04px;font-size:9.4px;line-height:9.4px;color:#2b2b2b;transform:scaleX(0.9297);">Customer D</span>
<span class="t" style="left:228.20px;top:175.55px;font-size:8.8px;line-height:8.8px;color:#1a1a1a;transform:scaleX(0.9398);font-weight:bold;-webkit-text-stroke-width:0.2px;">Quinten Epting:</span>
<span class="t" style="left:228.20px;top:185.55px;font-size:8.8px;line-height:8.8px;color:#1a1a1a;transform:scaleX(0.9037);-webkit-text-stroke-width:0.1px;">This formula does the following:</span>
<span class="t" style="left:228.20px;top:206.55px;font-size:8.8px;line-height:8.8px;color:#1a1a1a;transform:scaleX(0.9178);-webkit-text-stroke-width:0.1px;">-MAX(B2:B10) finds the highest revenue in the range B2(4700).</span>
<span class="t" style="left:228.20px;top:227.55px;font-size:8.8px;line-height:8.8px;color:#1a1a1a;transform:scaleX(0.9242);-webkit-text-stroke-width:0.1px;">-MATCH(MAX(B2:B10), B2:B10, 0) finds the position of the maximum value</span>
<span class="t" style="left:228.20px;top:237.55px;font-size:8.8px;line-height:8.8px;color:#1a1a1a;transform:scaleX(0.9089);-webkit-text-stroke-width:0.1px;">(4700 is in position 4, which corresponds to Customer D).</span>
<span class="t" style="left:228.20px;top:258.55px;font-size:8.8px;line-height:8.8px;color:#1a1a1a;transform:scaleX(0.9314);-webkit-text-stroke-width:0.1px;">-INDEX(A2:A10, ...) returns the name in Column A that corresponds to the</span>
<span class="t" style="left:228.20px;top:268.55px;font-size:8.8px;line-height:8.8px;color:#1a1a1a;transform:scaleX(0.9156);-webkit-text-stroke-width:0.1px;">position found by MATCH (Customer D).</span>
<span class="t" style="left:9.70px;top:70.55px;font-size:8.8px;line-height:8.8px;color:#464646;transform:scaleX(0.7911);-webkit-text-stroke-width:0.15px;">Paste</span>
<span class="t" style="left:48.00px;top:47.55px;font-size:8.8px;line-height:8.8px;color:#464646;transform:scaleX(0.8684);-webkit-text-stroke-width:0.15px;">Cut</span>
<span class="t" style="left:48.00px;top:63.55px;font-size:8.8px;line-height:8.8px;color:#464646;transform:scaleX(0.9004);-webkit-text-stroke-width:0.15px;">Copy</span>
<span class="t" style="left:48.00px;top:78.55px;font-size:8.8px;line-height:8.8px;color:#464646;transform:scaleX(0.8971);-webkit-text-stroke-width:0.15px;">Format Painter</span>
<span class="t" style="left:32.80px;top:94.97px;font-size:8.3px;line-height:8.3px;color:#5e5e5e;transform:scaleX(0.8869);-webkit-text-stroke-width:0.15px;">Clipboard</span>
<span class="t" style="left:118.20px;top:53.55px;font-size:8.8px;line-height:8.8px;color:#464646;transform:scaleX(0.9263);-webkit-text-stroke-width:0.15px;">Calibri</span>
<span class="t" style="left:198.30px;top:53.55px;font-size:8.8px;line-height:8.8px;color:#464646;transform:scaleX(0.7986);-webkit-text-stroke-width:0.15px;">11</span>
<span class="t" style="left:235.60px;top:54.21px;font-size:9.2px;line-height:9.2px;color:#555;transform:scaleX(1.0097);-webkit-text-stroke-width:0px;">A</span>
<span class="t" style="left:251.60px;top:55.23px;font-size:8.0px;line-height:8.0px;color:#555;transform:scaleX(1.0480);-webkit-text-stroke-width:0px;">A</span>
<span class="t" style="left:120.80px;top:75.47px;font-size:8.9px;line-height:8.9px;color:#444;transform:scaleX(0.8097);font-weight:bold;-webkit-text-stroke-width:0px;">B</span>
<span class="t" style="left:138.80px;top:76.04px;font-size:9.4px;line-height:9.4px;color:#444;transform:scaleX(0.9600);font-style:italic;font-family:'Liberation Serif',serif;-webkit-text-stroke-width:0.15px;">I</span>
<span class="t" style="left:153.40px;top:73.89px;font-size:8.4px;line-height:8.4px;color:#444;transform:scaleX(0.8907);-webkit-text-stroke-width:0.15px;">U</span>
<span class="t" style="left:240.60px;top:72.04px;font-size:9.4px;line-height:9.4px;color:#444;transform:scaleX(1.1491);-webkit-text-stroke-width:0.1px;">A</span>
<span class="t" style="left:176.50px;top:94.97px;font-size:8.3px;line-height:8.3px;color:#5e5e5e;transform:scaleX(0.8128);-webkit-text-stroke-width:0.15px;">Font</span>
<span class="t" style="left:379.00px;top:53.55px;font-size:8.8px;line-height:8.8px;color:#464646;transform:scaleX(0.9165);-webkit-text-stroke-width:0.15px;">Wrap Text</span>
<span class="t" style="left:379.00px;top:73.55px;font-size:8.8px;line-height:8.8px;color:#464646;transform:scaleX(0.9373);-webkit-text-stroke-width:0.15px;">Merge &amp; Center</span>
<span class="t" style="left:341.00px;top:94.97px;font-size:8.3px;line-height:8.3px;color:#5e5e5e;transform:scaleX(0.8481);-webkit-text-stroke-width:0.15px;">Alignment</span>
<span class="t" style="left:465.30px;top:53.55px;font-size:8.8px;line-height:8.8px;color:#464646;transform:scaleX(0.8787);-webkit-text-stroke-width:0.15px;">General</span>
<span class="t" style="left:467.80px;top:75.20px;font-size:10.4px;line-height:10.4px;color:#505050;transform:scaleX(1.0724);-webkit-text-stroke-width:0px;">$</span>
<span class="t" style="left:493.40px;top:75.37px;font-size:10.2px;line-height:10.2px;color:#505050;transform:scaleX(0.9710);-webkit-text-stroke-width:0px;">%</span>
<span class="t" style="left:511.80px;top:69.00px;font-size:13px;line-height:13px;color:#505050;transform:scaleX(1.2308);font-weight:bold;font-family:'Liberation Serif',serif;-webkit-text-stroke-width:0px;">,</span>
<span class="t" style="left:492.00px;top:94.97px;font-size:8.3px;line-height:8.3px;color:#5e5e5e;transform:scaleX(0.8673);-webkit-text-stroke-width:0.15px;">Number</span>
<span class="t" style="left:573.30px;top:70.55px;font-size:8.8px;line-height:8.8px;color:#464646;transform:scaleX(0.9383);-webkit-text-stroke-width:0.15px;">Conditional</span>
<span class="t" style="left:570.30px;top:80.55px;font-size:8.8px;line-height:8.8px;color:#464646;transform:scaleX(0.9323);-webkit-text-stroke-width:0.15px;">Formatting</span>
<span class="t" style="left:620.60px;top:70.55px;font-size:8.8px;line-height:8.8px;color:#464646;transform:scaleX(0.8937);-webkit-text-stroke-width:0.15px;">Format as</span>
<span class="t" style="left:625.00px;top:80.55px;font-size:8.8px;line-height:8.8px;color:#464646;transform:scaleX(0.8654);-webkit-text-stroke-width:0.15px;">Table</span>
<span class="t" style="left:666.20px;top:70.55px;font-size:8.8px;line-height:8.8px;color:#464646;transform:scaleX(0.9105);-webkit-text-stroke-width:0.15px;">Cell</span>
<span class="t" style="left:658.60px;top:80.55px;font-size:8.8px;line-height:8.8px;color:#464646;transform:scaleX(0.8261);-webkit-text-stroke-width:0.15px;">Styles</span>
<span class="t" style="left:619.20px;top:94.97px;font-size:8.3px;line-height:8.3px;color:#5e5e5e;transform:scaleX(0.7790);-webkit-text-stroke-width:0.15px;">Styles</span>
<span class="t" style="left:703.90px;top:70.55px;font-size:8.8px;line-height:8.8px;color:#464646;transform:scaleX(0.8857);-webkit-text-stroke-width:0.15px;">Insert</span>
<span class="t" style="left:730.50px;top:70.55px;font-size:8.8px;line-height:8.8px;color:#464646;transform:scaleX(0.9081);-webkit-text-stroke-width:0.15px;">Delete</span>
<span class="t" style="left:757.20px;top:70.55px;font-size:8.8px;line-height:8.8px;color:#464646;transform:scaleX(0.9184);-webkit-text-stroke-width:0.15px;">Format</span>
<span class="t" style="left:733.90px;top:94.97px;font-size:8.3px;line-height:8.3px;color:#5e5e5e;transform:scaleX(0.7912);-webkit-text-stroke-width:0.15px;">Cells</span>
<span class="t" style="left:798.80px;top:45.67px;font-size:12.2px;line-height:12.2px;color:#444;transform:scaleX(1.1130);-webkit-text-stroke-width:0px;">Σ</span>
<span class="t" style="left:811.20px;top:47.55px;font-size:8.8px;line-height:8.8px;color:#464646;transform:scaleX(0.8788);-webkit-text-stroke-width:0.15px;">AutoSum</span>
<span class="t" style="left:811.30px;top:63.55px;font-size:8.8px;line-height:8.8px;color:#464646;transform:scaleX(0.7911);-webkit-text-stroke-width:0.15px;">Fill</span>
<span class="t" style="left:810.70px;top:78.55px;font-size:8.8px;line-height:8.8px;color:#464646;transform:scaleX(0.9557);-webkit-text-stroke-width:0.15px;">Clear</span>
</div>
</body>
</html>
